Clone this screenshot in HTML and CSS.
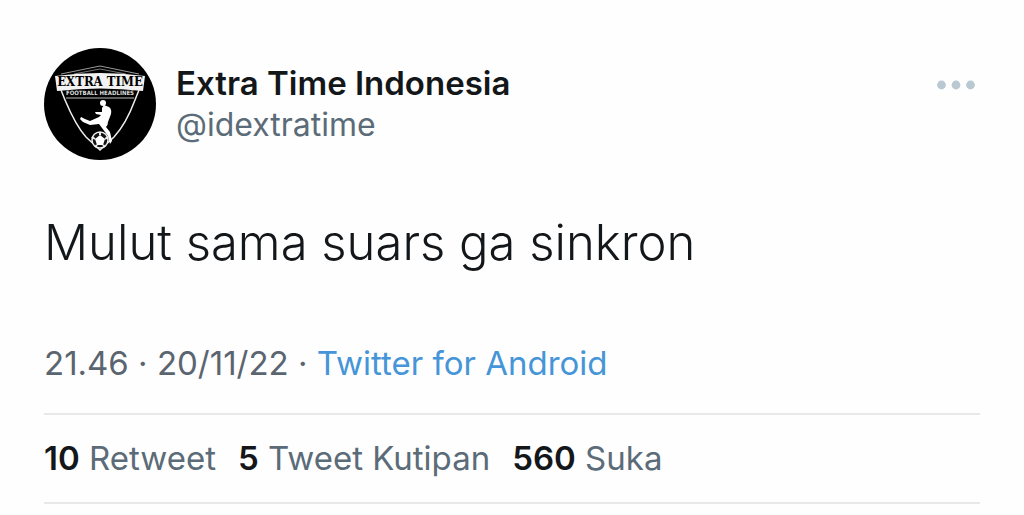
FILE: index.html
```html
<!DOCTYPE html>
<html lang="id">
<head>
    <meta charset="UTF-8">
    <meta name="viewport" content="width=device-width, initial-scale=1.0">
    <title>Extra Time Indonesia</title>
    <link rel="stylesheet" href="styles.css">
</head>
<body>
    <article class="tweet">
        <header class="tweet-header">
            <svg class="avatar" viewBox="0 0 112 112" role="img" aria-label="Extra Time Football Headlines">
                <circle cx="56" cy="56" r="56" fill="#000"/>
                <!-- Perisai -->
                <path d="M17 26 L56 18 L95 26" fill="none" stroke="#999" stroke-width="1"/>
                <path d="M30 26 L56 21 L82 26" fill="none" stroke="#777" stroke-width="1"/>
                <path d="M17 42 L21 52 Q32 78 42 89 L56 102 L70 89 Q82 76 91 52 L95 42" fill="none" stroke="#eee" stroke-width="1.5"/>
                <path d="M11 28 Q56 22 101 28 L99 43 Q56 38 13 43 Z" fill="#f2f2f2"/>
                <text class="logo-title" x="56" y="38">EXTRA TIME</text>
                <text class="logo-sub" x="56" y="47">FOOTBALL HEADLINES</text>
                <path d="M22 50 H90" stroke="#bbb" stroke-width="1"/>
                <!-- Pemain -->
                <circle cx="59" cy="55" r="3" fill="#fff"/>
                <path d="M60 57 L65 59 Q68 61 67 66 L64 74 Q64 77 62 79 L66 84 L68 93 L66 96 L64 88 L58 80 L55 76 L46 77 L39 74 L36 71 L37 69 L41 71 L46 73 L55 69 L57 67 L52 66 L51 64 L58 64 L58 60 Z" fill="#fff"/>
                <!-- Bola -->
                <circle cx="56" cy="92" r="8" fill="#111" stroke="#eee" stroke-width="1.5"/>
                <path d="M56 87 L61 91 L59 97 L53 97 L51 91 Z" fill="#fff"/>
                <path d="M56 87 V84 M61 91 L64 89 M59 97 L61 99 M53 97 L51 99 M51 91 L48 89" stroke="#eee" stroke-width="2"/>
            </svg>
            <div class="author">
                <h1 class="name">Extra Time Indonesia</h1>
                <a class="handle" href="#">@idextratime</a>
            </div>
            <button class="more-btn" type="button" aria-label="Lainnya">
                <svg width="38" height="10" viewBox="0 0 38 10" fill="#b9c8d1">
                    <circle cx="4.5" cy="5" r="4.4"/>
                    <circle cx="19" cy="5" r="4.4"/>
                    <circle cx="33.5" cy="5" r="4.4"/>
                </svg>
            </button>
        </header>

        <p class="tweet-text">Mulut sama suars ga sinkron</p>

        <div class="meta">21.46 · 20/11/22 · <a href="#">Twitter for Android</a></div>

        <div class="stats">
            <a href="#"><strong>10</strong> Retweet</a>
            <a href="#"><strong>5</strong> Tweet Kutipan</a>
            <a href="#"><strong>560</strong> Suka</a>
        </div>
    </article>
</body>
</html>
```
FILE: styles.css
```css
* {
    margin: 0;
    padding: 0;
    box-sizing: border-box;
}

body {
    font-family: Inter, sans-serif;
    background: #fefefe;
    color: #14171a;
}

a {
    color: inherit;
    text-decoration: none;
}

.tweet {
    padding: 48px 44px 0;
}

.tweet-header {
    display: flex;
    align-items: flex-start;
    gap: 20px;
}

.avatar {
    width: 112px;
    height: 112px;
    flex-shrink: 0;
}

.logo-title {
    font: bold 13px "DejaVu Serif Condensed", "DejaVu Serif", serif;
    text-anchor: middle;
    fill: #000;
}

.logo-sub {
    font: bold 6px "DejaVu Sans Condensed", sans-serif;
    text-anchor: middle;
    fill: #ddd;
}

.author {
    flex: 1;
    padding-top: 15px;
}

.name {
    font-size: 33px;
    font-weight: 600;
    line-height: 40px;
}

.handle {
    display: block;
    font-size: 32px;
    line-height: 44px;
    color: #5b6b78;
}

.more-btn {
    display: flex;
    padding: 32px 5px;
    background: none;
    border: none;
    cursor: pointer;
}

.tweet-text {
    margin-top: 51px;
    font-size: 49px;
    font-weight: 300;
    line-height: 64px;
}

.meta {
    padding: 68px 0 30px;
    font-size: 33px;
    line-height: 40px;
    color: #5b6570;
    border-bottom: 2px solid #e6e8e9;
}

.meta a {
    color: #4595d8;
}

.stats {
    display: flex;
    flex-wrap: wrap;
    gap: 22px;
    padding: 23px 0 24px;
    font-size: 33px;
    line-height: 40px;
    color: #5b6b78;
    border-bottom: 2px solid #e6e8e9;
}

.stats strong {
    font-weight: 600;
    color: #14171a;
}
```
